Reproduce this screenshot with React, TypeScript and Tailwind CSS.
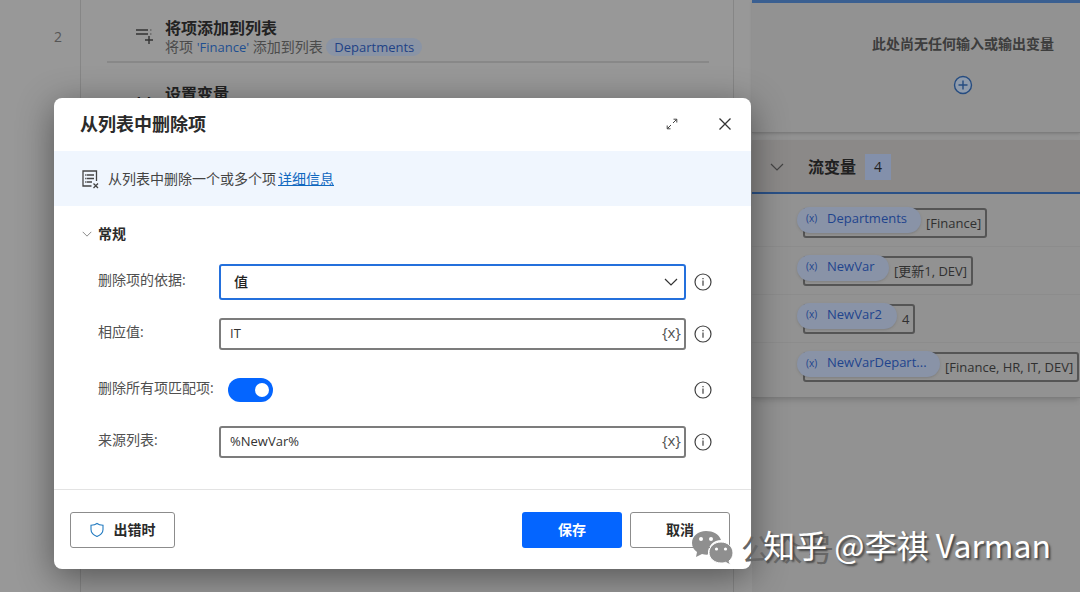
import type { ReactNode } from "react";

const variables = [
    { name: "Departments", value: "[Finance]", width: "w-[124px]" },
    { name: "NewVar", value: "[更新1, DEV]", width: "w-[92px]" },
    { name: "NewVar2", value: "4", width: "w-[100px]" },
    { name: "NewVarDepart...", value: "[Finance, HR, IT, DEV]", width: "w-[143px]" },
];

function Chevron({ className }: { className: string }) {
    return (
        <svg viewBox="0 0 14 8" className={className} fill="none" stroke="currentColor" strokeWidth="1.2">
            <path d="M1 1l6 6 6-6" />
        </svg>
    );
}

function InfoButton({ label }: { label: string }) {
    return (
        <button type="button" aria-label={label} className="ml-2 shrink-0 text-[#404040]">
            <svg viewBox="0 0 18 18" className="size-[18px]" fill="none" stroke="currentColor" strokeWidth="1.2">
                <circle cx="9" cy="9" r="8" />
                <path d="M9 7.6v5.2M9 4.9v1.4" />
            </svg>
        </button>
    );
}

function Field({ id, label, children }: { id: string; label: string; children: ReactNode }) {
    return (
        <div className="flex items-center">
            <label htmlFor={id} className="w-[121px] shrink-0 pb-1 text-sm whitespace-nowrap text-[#505050]">
                {label}
            </label>
            <div className="flex min-w-0 flex-1 items-center">{children}</div>
            <InfoButton label={`${label} 信息`} />
        </div>
    );
}

function TextField({ id, label, value }: { id: string; label: string; value: string }) {
    return (
        <Field id={id} label={label}>
            <div className="flex h-8 w-full items-center rounded-[3px] border-2 border-[#7c7c7c] bg-white pr-[3px] pl-[9px]">
                <input id={id} defaultValue={value} className="min-w-0 flex-1 text-[13px] font-medium text-[#333] outline-none" />
                <button type="button" aria-label="选择变量" className="pb-1 text-[15px] leading-5 text-[#505050]">
                    {"{x}"}
                </button>
            </div>
        </Field>
    );
}

function Workspace() {
    return (
        <main className="flex min-w-0 flex-1 bg-[#989898]">
            <div className="w-20 shrink-0 pt-[27px] pl-[54px] text-sm text-[#555]">2</div>
            <div className="mr-[18px] min-w-0 flex-1 border-x border-[#868686] pr-6 pl-[26px]">
                <div className="flex h-[63px] border-b-2 border-[#888] pt-[18px] pl-8">
                    <svg viewBox="0 0 18 18" className="mt-2 -ml-1 size-[18px] shrink-0" fill="none" stroke="#333" strokeWidth="1.4">
                        <path d="M1 4h12M1 8h12M10 14h8M14 10v8" />
                        <path d="M15 4h1.5M15 8h1.5" stroke="#666" />
                    </svg>
                    <div className="ml-3">
                        <h2 className="text-base leading-5 font-bold text-[#222]">将项添加到列表</h2>
                        <p className="flex items-center text-sm leading-[18px] whitespace-pre text-[#4b4b4b]">
                            将项 <span className="text-[13px] text-[#1f4f91]">'Finance'</span> 添加到列表{" "}
                            <span className="rounded-full bg-[#8a94a5] px-2 text-[13px] text-[#1f4285]">Departments</span>
                        </p>
                    </div>
                </div>
                <div className="flex pt-[21px] pl-8">
                    <span className="-ml-1 w-[18px] pt-2 text-sm leading-5">{"{x}"}</span>
                    <h2 className="ml-3 text-base leading-5 font-bold text-[#222]">设置变量</h2>
                </div>
            </div>
        </main>
    );
}

function VariablesPanel() {
    return (
        <aside className="w-[328px] shrink-0 bg-[#929292]">
            <section className="flex h-[133px] flex-col items-center border-t-[3px] border-b border-t-[#3a5f91] border-b-[#7d7d7d] pt-[31px] pl-[94px] shadow-sm">
                <p className="text-sm leading-5 font-bold whitespace-nowrap text-[#3d3d3d]">此处尚无任何输入或输出变量</p>
                <button type="button" aria-label="添加变量" className="mt-[21px] text-[#264c80]">
                    <svg viewBox="0 0 20 20" className="size-5" fill="#909cac" stroke="currentColor" strokeWidth="1.4">
                        <circle cx="10" cy="10" r="8.5" />
                        <path d="M10 5.5v9M5.5 10h9" />
                    </svg>
                </button>
            </section>
            <section className="mt-[7px] shadow-md">
                <h2 className="flex h-[54px] items-center border-b-2 border-[#2a5187] bg-[#8b8988] pt-0.5 pl-[18px] text-[#202020]">
                    <Chevron className="h-2 w-3.5 text-[#444]" />
                    <span className="ml-6 text-base font-bold">流变量</span>
                    <span className="ml-[9px] flex h-[26px] w-[26px] items-center justify-center bg-[#8390ab] text-sm">4</span>
                </h2>
                <ul className="border-b border-[#7d7d7d] pt-[5px] pb-1.5">
                    {variables.map((variable) => (
                        <li key={variable.name} className="flex h-12 items-center border-b border-[#8c8c8c] pl-[51px] last:border-b-0">
                            <div className="flex h-[30px] shrink-0 items-start rounded-[3px] border-2 border-[#555] pr-1">
                                <button
                                    type="button"
                                    className={`-mt-[3px] -ml-2 flex h-[26px] items-center rounded-full bg-[#8993a7] pr-1 pb-0.5 pl-[9px] text-[13px] whitespace-nowrap text-[#1f448d] shadow ${variable.width}`}
                                >
                                    <span className="w-[21px] shrink-0 text-left text-[10px]">(x)</span>
                                    {variable.name}
                                </button>
                                <span className="ml-[5px] text-[13px] leading-[26px] whitespace-nowrap text-[#303030]">{variable.value}</span>
                            </div>
                        </li>
                    ))}
                </ul>
            </section>
        </aside>
    );
}

function RemoveItemDialog() {
    return (
        <form
            role="dialog"
            aria-labelledby="dialog-title"
            className="w-full max-w-[697px] overflow-hidden rounded-lg bg-white shadow-[0_8px_36px_rgba(0,0,0,0.45)]"
            onSubmit={(event) => event.preventDefault()}
        >
            <header className="flex h-[53px] items-center pr-[19px] pb-0.5 pl-[26px]">
                <h1 id="dialog-title" className="flex-1 text-lg font-bold text-[#2b2b2b]">从列表中删除项</h1>
                <button type="button" aria-label="展开" className="mr-10 text-[#444]">
                    <svg viewBox="0 0 12 12" className="size-3" fill="none" stroke="currentColor">
                        <path d="M7.5 1.2h3.3v3.3M10.6 1.4L7 5M4.5 10.8H1.2V7.5M1.4 10.6L5 7" />
                    </svg>
                </button>
                <button type="button" aria-label="关闭" className="text-[#333]">
                    <svg viewBox="0 0 14 14" className="size-3.5" fill="none" stroke="currentColor" strokeWidth="1.3">
                        <path d="M1.5 1.5l11 11M12.5 1.5l-11 11" />
                    </svg>
                </button>
            </header>

            <div className="flex h-[55px] items-center bg-[#f0f6fe] pl-7 text-sm text-[#444]">
                <svg viewBox="0 0 18 20" className="mr-2 h-5 w-[18px]" fill="none" stroke="#444" strokeWidth="1.3">
                    <path d="M9.5 17H1V2h13.5v10" />
                    <path d="M4.5 6h7.5M4.5 9.5h7.5M4.5 13H10M3 6h.8M3 9.5h.8M3 13h.8" />
                    <path d="M11.5 14.5l4.5 4.5M16 14.5L11.5 19" />
                </svg>
                <p>
                    从列表中删除一个或多个项
                    <a href="#details" className="ml-0.5 text-[#1068bf] underline">详细信息</a>
                </p>
            </div>

            <div className="pt-[18px] pr-[39px] pb-[31px] pl-11">
                <h2 className="-ml-4 flex items-center text-sm leading-5 font-bold text-[#2b2b2b]">
                    <Chevron className="mr-1.5 h-1.5 w-2.5 text-[#777]" />
                    常规
                </h2>
                <div className="mt-5">
                    <Field id="remove-by" label="删除项的依据:">
                        <div className="relative w-full">
                            <select
                                id="remove-by"
                                className="block h-9 w-full appearance-none rounded-[3px] border-2 border-[#2470dc] bg-white pl-[13px] text-sm font-medium text-[#222] outline-none"
                            >
                                <option>值</option>
                            </select>
                            <Chevron className="pointer-events-none absolute top-3.5 right-2 h-2 w-3.5 text-[#333]" />
                        </div>
                    </Field>
                </div>
                <div className="mt-[18px]">
                    <TextField id="item-value" label="相应值:" value="IT" />
                </div>
                <div className="mt-7">
                    <Field id="remove-all" label="删除所有项匹配项:">
                        <input
                            id="remove-all"
                            type="checkbox"
                            role="switch"
                            defaultChecked
                            className="ml-[9px] h-6 w-[45px] appearance-none rounded-full bg-[#0465ff] before:mt-[5px] before:ml-[27px] before:block before:size-3.5 before:rounded-full before:bg-white"
                        />
                    </Field>
                </div>
                <div className="mt-6">
                    <TextField id="source-list" label="来源列表:" value="%NewVar%" />
                </div>
            </div>

            <footer className="flex h-20 border-t border-[#e3e3e3] pt-[22px] pr-[21px] pl-4 text-sm font-bold text-[#2b2b2b]">
                <button type="button" className="mr-auto flex h-9 w-[105px] items-center justify-center gap-2.5 rounded-[3px] border border-[#8c8c8c]">
                    <svg viewBox="0 0 14 16" className="h-4 w-3.5" fill="none" stroke="#217ac0" strokeWidth="1.1">
                        <path d="M7 1.5c1.5 1.2 3.5 1.7 6 1.8v4.2c0 3-2 5.3-6 7-4-1.7-6-4-6-7V3.3c2.5-.1 4.5-.6 6-1.8z" />
                    </svg>
                    出错时
                </button>
                <button type="submit" className="h-9 w-[100px] rounded-[3px] bg-[#0465ff] text-white">保存</button>
                <button type="button" className="ml-2 h-9 w-[100px] rounded-[3px] border border-[#8c8c8c]">取消</button>
            </footer>
        </form>
    );
}

function Watermark() {
    return (
        <>
            <div className="pointer-events-none absolute right-[29px] bottom-5 flex h-12 w-[360px] items-center text-[31px] whitespace-pre">
                <svg viewBox="0 0 42 36" className="h-9 w-[42px]">
                    <path fill="#8f8f8f" d="M15 1C7 1 1 6 1 13c0 4 2 7 5 9l-1 5 6-3c2 .6 4 .7 6 .6C16 16 23 10 30 10 28 4 22 1 15 1z" />
                    <path fill="#8f8f8f" stroke="#fff" d="M30 12c-7 0-12 5-12 10.500S23 33 30 33c2 0 3-.2 4.500-.7l5 2.700-1.500-4c2.500-2 4-5 4-8 0-6-5-11-12-11z" />
                    <g fill="#fff">
                        <circle cx="10" cy="9" r="2" />
                        <circle cx="20" cy="9" r="2" />
                        <circle cx="25.500" cy="19" r="1.600" />
                        <circle cx="34.500" cy="19" r="1.600" />
                    </g>
                </svg>
                <span className="ml-2 font-['Noto_Sans_CJK_SC',sans-serif] text-[#666]">公众号</span>
            </div>
            <p className="pointer-events-none absolute right-[29px] bottom-6 font-['Noto_Sans_CJK_SC',sans-serif] text-[32px] leading-12 whitespace-nowrap text-white [text-shadow:2px_2px_2px_#444]">
                知乎 @李祺 Varman
            </p>
        </>
    );
}

export default function App() {
    return (
        <div className="relative flex min-h-screen overflow-hidden bg-[#8e8e8e] font-['Open_Sans','Noto_Sans_CJK_SC',sans-serif]">
            <Workspace />
            <VariablesPanel />
            {/* Modal layer */}
            <div className="absolute inset-0 pt-[98px] pr-5 pl-[54px]">
                <RemoveItemDialog />
            </div>
            <Watermark />
        </div>
    );
}
